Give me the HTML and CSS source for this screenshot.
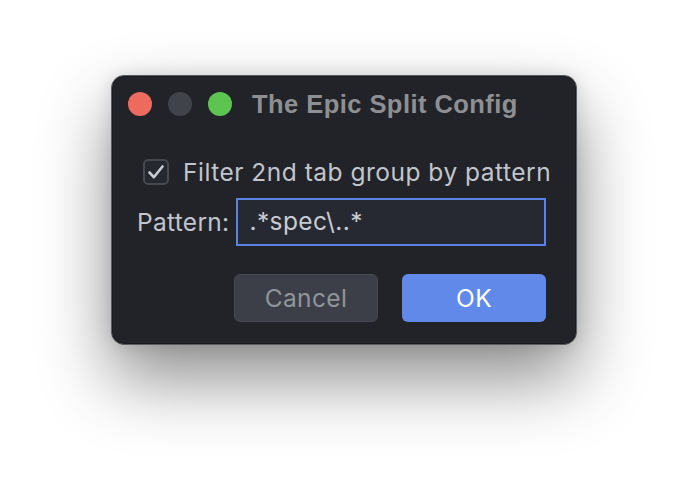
FILE: index.html
```html
<!DOCTYPE html>
<html>
<head>
<meta charset="utf-8">
<link rel="stylesheet" href="styles.css">
</head>
<body>
<div class="page">
  <div class="window">
    <div class="titlebar">
      <span class="light red"></span>
      <span class="light gray"></span>
      <span class="light green"></span>
      <span class="title">The Epic Split Config</span>
    </div>
    <div class="content">
      <label class="check-row">
        <span class="checkbox">
          <svg width="26" height="26" viewBox="0 0 26 26"><path d="M6.5 13.5 L10.8 18.2 L19.5 7.5" fill="none" stroke="#c9ccd2" stroke-width="2.6" stroke-linecap="round" stroke-linejoin="round"/></svg>
        </span>
        <span class="check-label">Filter 2nd tab group by pattern</span>
      </label>
      <div class="field-row">
        <span class="field-label">Pattern:</span>
        <div class="input">.*spec\..*</div>
      </div>
      <div class="buttons">
        <div class="btn cancel">Cancel</div>
        <div class="btn ok">OK</div>
      </div>
    </div>
  </div>
</div>
</body>
</html>
```
FILE: styles.css
```css
html, body {
  margin: 0;
  padding: 0;
  background: #ffffff;
}
body {
  width: 688px;
  height: 492px;
  overflow: hidden;
  font-family: "Inter", "Liberation Sans", sans-serif;
}
.page {
  padding-top: 75px;
}
.window {
  width: 466px;
  height: 270px;
  margin: 0 auto;
  box-sizing: border-box;
  background: #212328;
  border: 1px solid #5c5d61;
  border-radius: 13px;
  box-shadow: inset 0 0 0 1px #1a1b1e, 0 34px 70px rgba(0, 0, 0, 0.45), 0 0 18px rgba(0, 0, 0, 0.12);
  display: flex;
  flex-direction: column;
}
.titlebar {
  height: 56px;
  display: flex;
  align-items: center;
  padding-left: 16px;
  gap: 16px;
}
.light {
  width: 24px;
  height: 24px;
  border-radius: 50%;
  flex: none;
}
.red { background: #ed6a5e; }
.gray { background: #404349; }
.green { background: #5dc452; }
.title {
  margin-left: 4px;
  font-family: "Liberation Sans", "Inter", sans-serif;
  font-weight: bold;
  font-size: 25.5px;
  color: #8e8f93;
  letter-spacing: 0.45px;
  line-height: 1;
  padding-top: 1px;
  white-space: nowrap;
}
.content {
  display: flex;
  flex-direction: column;
  padding: 27px 30px 22px 25px;
}
.check-row {
  display: flex;
  align-items: center;
  height: 26px;
  padding-left: 6px;
  gap: 14px;
}
.checkbox {
  width: 26px;
  height: 26px;
  box-sizing: border-box;
  border: 2px solid #464950;
  border-radius: 5px;
  background: #25282e;
  position: relative;
  flex: none;
}
.checkbox svg {
  position: absolute;
  left: -2px;
  top: -2px;
}
.check-label {
  font-size: 24.5px;
  letter-spacing: 0.5px;
  color: #c2c5cc;
  line-height: 1;
  white-space: nowrap;
}
.field-row {
  display: flex;
  align-items: center;
  margin-top: 13px;
  gap: 7px;
}
.field-label {
  font-size: 24.5px;
  letter-spacing: 0.3px;
  color: #c2c5cc;
  line-height: 1;
  white-space: nowrap;
}
.input {
  flex: 1;
  height: 48px;
  box-sizing: border-box;
  border: 2px solid #5b83e1;
  background: #262932;
  color: #c8cbd2;
  font-size: 24.5px;
  letter-spacing: 0.4px;
  display: flex;
  align-items: center;
  padding-left: 11px;
  padding-bottom: 2px;
}
.buttons {
  display: flex;
  justify-content: flex-end;
  gap: 24px;
  margin-top: 28px;
}
.btn {
  width: 144px;
  height: 48px;
  box-sizing: border-box;
  border-radius: 6px;
  display: flex;
  align-items: center;
  justify-content: center;
  font-size: 24.5px;
  letter-spacing: 0.4px;
}
.cancel {
  background: #3c3f48;
  border: 1px solid #464952;
  color: #91949b;
}
.ok {
  background: #6089e9;
  color: #ffffff;
}
```
